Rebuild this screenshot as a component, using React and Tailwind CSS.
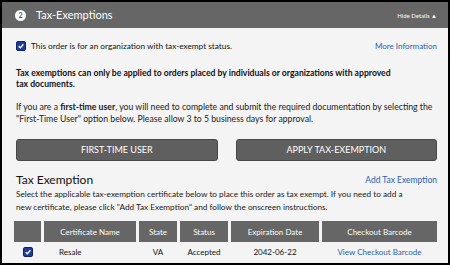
import React from "react";

function Check() {
  return (
    <span className="flex h-[10px] w-[10px] items-center justify-center rounded-[2px] border border-[#0e2370] bg-[#1f3c99]">
      <svg viewBox="0 0 10 10" className="h-[8px] w-[8px]">
        <path d="M2 5.2 L4.2 7.2 L8 2.8" stroke="white" strokeWidth="1.6" fill="none" />
      </svg>
    </span>
  );
}

export default function App() {
  const cols = [
    { label: "", w: "w-[27px]" },
    { label: "Certificate Name", w: "w-[92px]" },
    { label: "State", w: "w-[38px]" },
    { label: "Status", w: "w-[48px]" },
    { label: "Expiration Date", w: "w-[88px]" },
    { label: "Checkout Barcode", w: "flex-1" },
  ];
  return (
    <div className="h-[265px] w-[450px] overflow-hidden bg-black p-[2px] font-['Lato',sans-serif]">
      <div className="flex h-full flex-col bg-[#f4f4f4]">
        <div className="flex h-[26px] shrink-0 items-center bg-[#666666] pl-[13px] pr-[11px] text-white">
          <span className="flex h-[11px] w-[11px] items-center justify-center rounded-full bg-white text-[7px] font-bold text-[#555]">2</span>
          <span className="ml-[10px] text-[11px]">Tax-Exemptions</span>
          <span className="ml-auto text-[6px]">Hide Details ▲</span>
        </div>
        <div className="pl-[14px] pr-[11px]">
          <div className="mt-[13px] flex h-[10px] items-center">
            <Check />
            <span className="ml-[5px] text-[8.25px] text-[#111]">This order is for an organization with tax-exempt status.</span>
            <span className="ml-auto text-[8px] text-[#2a5db0]">More Information</span>
          </div>
          <p className="mt-[16px] whitespace-nowrap text-[8.65px] font-bold leading-[11px] text-[#111]">
            Tax exemptions can only be applied to orders placed by individuals or organizations with approved
            <br />
            tax documents.
          </p>
          <p className="mt-[12px] whitespace-nowrap text-[8.7px] leading-[12px] text-[#1a1a1a]">
            If you are a <b>first-time user</b>, you will need to complete and submit the required documentation by selecting the
            <br />
            "First-Time User" option below. Please allow 3 to 5 business days for approval.
          </p>
          <div className="mt-[14px] flex gap-[18px]">
            <button className="flex h-[22px] flex-1 items-center justify-center rounded-[3px] border border-[#474747] bg-[#5f5f5f] text-[9px] text-white">FIRST-TIME USER</button>
            <button className="flex h-[22px] flex-1 items-center justify-center rounded-[3px] border border-[#474747] bg-[#5f5f5f] text-[9px] text-white">APPLY TAX-EXEMPTION</button>
          </div>
          <div className="mt-[11px] flex items-center">
            <span className="text-[12px] leading-[16px] text-[#111]">Tax Exemption</span>
            <span className="ml-auto text-[8.5px] text-[#2a5db0]">Add Tax Exemption</span>
          </div>
          <p className="whitespace-nowrap text-[8.25px] leading-[13px] text-[#1a1a1a]">
            Select the applicable tax-exemption certificate below to place this order as tax exempt. If you need to add a
            <br />
            new certificate, please click "Add Tax Exemption" and follow the onscreen instructions.
          </p>
          <div className="-ml-[2px] mt-[7px] flex gap-[3px]">
            {cols.map((c, i) => (
              <div key={i} className={`${c.w} flex h-[21px] items-center justify-center bg-[#666666] text-[8px] text-white`}>{c.label}</div>
            ))}
          </div>
          <div className="-ml-[2px] flex gap-[3px] text-[8px] text-[#111]">
            <div className="flex h-[20px] w-[27px] items-center justify-center"><Check /></div>
            <div className="flex h-[20px] w-[92px] items-center pl-[15px]">Resale</div>
            <div className="flex h-[20px] w-[38px] items-center justify-center">VA</div>
            <div className="flex h-[20px] w-[48px] items-center justify-center">Accepted</div>
            <div className="flex h-[20px] w-[88px] items-center justify-center">2042-06-22</div>
            <div className="flex h-[20px] flex-1 items-center justify-center text-[#2a5db0]">View Checkout Barcode</div>
          </div>
        </div>
      </div>
    </div>
  );
}
